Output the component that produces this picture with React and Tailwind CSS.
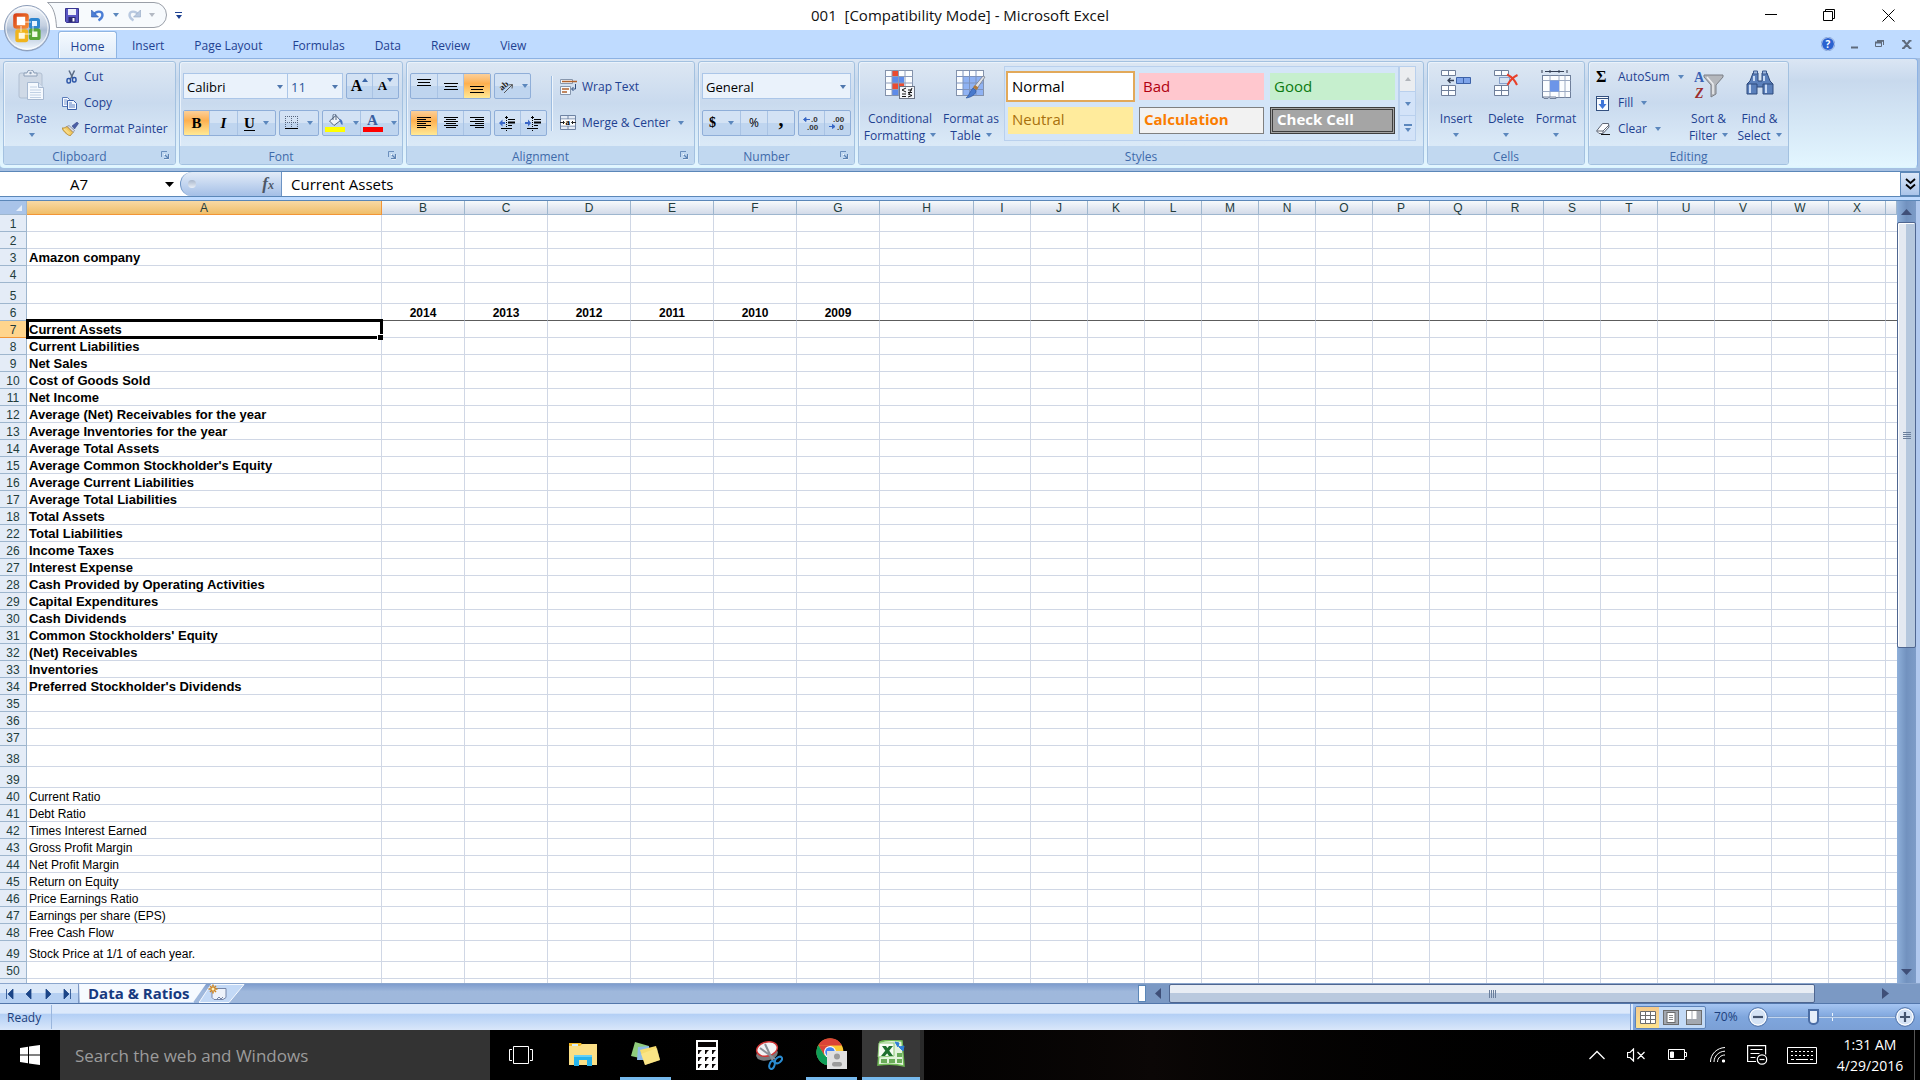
import { useState } from "react";
import clsx from "clsx";

const LETTERS = "BCDEFGHIJKLMNOPQRSTUVWX".split("");
const YEARS = ["2014", "2013", "2012", "2011", "2010", "2009"];

const ROWS = [
  { n: 1 },
  { n: 2 },
  { n: 3, text: "Amazon company", bold: true },
  { n: 4 },
  { n: 5, tall: true },
  { n: 6, years: true },
  { n: 7, text: "Current Assets", bold: true },
  { n: 8, text: "Current Liabilities", bold: true },
  { n: 9, text: "Net Sales", bold: true },
  { n: 10, text: "Cost of Goods Sold", bold: true },
  { n: 11, text: "Net Income", bold: true },
  { n: 12, text: "Average (Net) Receivables for the year", bold: true },
  { n: 13, text: "Average Inventories for the year", bold: true },
  { n: 14, text: "Average Total Assets", bold: true },
  { n: 15, text: "Average Common Stockholder's Equity", bold: true },
  { n: 16, text: "Average Current Liabilities", bold: true },
  { n: 17, text: "Average Total Liabilities", bold: true },
  { n: 18, text: "Total Assets", bold: true },
  { n: 22, text: "Total Liabilities", bold: true },
  { n: 26, text: "Income Taxes", bold: true },
  { n: 27, text: "Interest Expense", bold: true },
  { n: 28, text: "Cash Provided by Operating Activities", bold: true },
  { n: 29, text: "Capital Expenditures", bold: true },
  { n: 30, text: "Cash Dividends", bold: true },
  { n: 31, text: "Common Stockholders' Equity", bold: true },
  { n: 32, text: "(Net) Receivables", bold: true },
  { n: 33, text: "Inventories", bold: true },
  { n: 34, text: "Preferred Stockholder's Dividends", bold: true },
  { n: 35 },
  { n: 36 },
  { n: 37 },
  { n: 38, tall: true },
  { n: 39, tall: true },
  { n: 40, text: "Current Ratio" },
  { n: 41, text: "Debt Ratio" },
  { n: 42, text: "Times Interest Earned" },
  { n: 43, text: "Gross Profit Margin" },
  { n: 44, text: "Net Profit Margin" },
  { n: 45, text: "Return on Equity" },
  { n: 46, text: "Price Earnings Ratio" },
  { n: 47, text: "Earnings per share (EPS)" },
  { n: 48, text: "Free Cash Flow" },
  { n: 49, text: "Stock Price at 1/1 of each year.", tall: true },
  { n: 50 },
  { n: "" },
];

// small drop-down triangle
const Caret = ({ className = "text-[#5b87bd]" }) => (
  <svg width="6" height="4" viewBox="0 0 6 4" className={clsx("shrink-0", className)}>
    <path d="M0 0h6L3 4z" fill="currentColor" />
  </svg>
);

/* ---------- ribbon building blocks ---------- */

const Group = ({ label, launcher, className, children }) => (
  <section
    className={clsx(
      "flex h-[104px] shrink-0 flex-col overflow-hidden rounded-[3px] border border-[#a3c1e0] bg-linear-to-b from-[#dde7f3] from-0% via-[#c9daee] via-40% to-[#dae9f7] to-80% shadow-[inset_1px_1px_0_#eaf2fb]",
      className
    )}
  >
    <div className="flex h-[84px] px-[3px]">{children}</div>
    <div className="flex h-[18px] items-center bg-[#c1d8f0] px-1">
      <h2 className="flex-1 pt-1 text-center text-[12px] leading-4 text-[#3e6aaa]">{label}</h2>
      {launcher && (
        <button aria-label={`${label} options`} className="flex w-5 justify-end pr-px">
          <svg width="9" height="9" viewBox="0 0 9 9" fill="none">
            <path d="M0.5 6V0.5H6" stroke="#6b8fbd" />
            <path d="M3 3l3 3M8 3.5V8H3.5" stroke="#fff" />
            <path d="M4 4l3 3M7.5 3v4.5H3" stroke="#5d83b3" strokeWidth="1.2" />
          </svg>
        </button>
      )}
    </div>
  </section>
);

const BtnBox = ({ className, children }) => (
  <div
    className={clsx(
      "flex h-[26px] overflow-hidden rounded-[2px] border border-[#8faed8] bg-linear-to-b from-[#d3e2f4] from-50% to-[#bfd5ef] to-50% divide-x divide-[#a9c3e4]",
      className
    )}
  >
    {children}
  </div>
);

const Btn = ({ label, active, className, children }) => (
  <button
    aria-label={label}
    className={clsx(
      "flex items-center justify-center gap-2",
      active && "bg-linear-to-b from-[#fbcf98] via-[#fdb04f] via-40% to-[#ffe994]",
      className
    )}
  >
    {children}
  </button>
);

const SmallBtn = ({ icon, label, caret }) => (
  <button className="flex h-[26px] items-center whitespace-nowrap text-[12px] leading-4 text-[#1e4191]">
    <span className="flex w-[22px] shrink-0">{icon}</span>
    {label}
    {caret && <Caret className="ml-2 text-[#5b87bd]" />}
  </button>
);

const BigBtn = ({ icon, lines, className }) => (
  <button
    className={clsx(
      "flex h-[84px] flex-col items-center whitespace-nowrap pt-2 text-[12px] leading-[17px] text-[#1e4191]",
      className
    )}
  >
    <span className="flex h-10 items-start">{icon}</span>
    <span>{lines[0]}</span>
    <span className="flex h-4 items-center gap-[5px]">
      {lines[1]}
      <Caret />
    </span>
  </button>
);

const Combo = ({ label, value, className, selectClass }) => (
  <div className={clsx("relative h-[26px] border border-[#abc6e8] bg-[#eaf2fb]", className)}>
    <select
      aria-label={label}
      defaultValue={value}
      className={clsx("h-full w-full appearance-none bg-transparent pb-[2px] pl-[3px] text-[13px] leading-4 outline-none", selectClass)}
    >
      <option>{value}</option>
    </select>
    <Caret className="pointer-events-none absolute right-1 top-[11px] text-[#4f77ad]" />
  </div>
);

/* ---------- icons ---------- */

const Lines = ({ widths, top = 0, align = "center" }) => (
  <svg width="16" height="14" viewBox="0 0 16 14" shapeRendering="crispEdges">
    {widths.map((w, i) => {
      const x = align === "left" ? 1 : align === "right" ? 15 - w : (16 - w) / 2;
      return <rect key={i} x={x} y={top + i * 2 + (widths.length === 3 ? i : 0)} width={w} height="1" fill="#000" />;
    })}
  </svg>
);

const OfficeLogo = () => (
  <svg width="48" height="48" viewBox="0 0 48 48">
    <defs>
      <linearGradient id="orb" x1="0" y1="0" x2="0" y2="1">
        <stop offset="0" stopColor="#f5f8fc" />
        <stop offset="0.45" stopColor="#c3cfe0" />
        <stop offset="0.55" stopColor="#a9bbd3" />
        <stop offset="1" stopColor="#f4faff" />
      </linearGradient>
      <linearGradient id="orbRed" x1="0" y1="0" x2="1" y2="1">
        <stop offset="0" stopColor="#d8431b" />
        <stop offset="1" stopColor="#f58a32" />
      </linearGradient>
    </defs>
    <circle cx="24" cy="25" r="22.5" fill="#7186a5" opacity="0.5" />
    <circle cx="24" cy="24" r="22.5" fill="url(#orb)" stroke="#8b9cb8" />
    <circle cx="24" cy="24" r="21" fill="none" stroke="#fff" opacity="0.8" />
    <rect x="12" y="11" width="12" height="12" rx="1.5" fill="#fff" stroke="url(#orbRed)" strokeWidth="3.6" />
    <rect x="27.5" y="15.5" width="8" height="8" rx="1" fill="#e8f4ff" stroke="#2f86cf" strokeWidth="3" />
    <rect x="14" y="27" width="9.5" height="9.5" rx="1" fill="#fff9e0" stroke="#f0b41c" strokeWidth="3.4" />
    <rect x="27.500" y="26" width="8.5" height="8.5" rx="1" fill="#f1fbe8" stroke="#57a637" strokeWidth="3.2" />
    <path d="M21 18h7M21 30h7M18 22v6M30 21v7" stroke="#fff" opacity="0.8" />
  </svg>
);

const SaveIcon = () => (
  <svg width="14" height="15" viewBox="0 0 14 15">
    <path d="M0.5 0.5h13v14h-12l-1-1z" fill="#5a57c4" stroke="#38358f" />
    <rect x="3" y="1" width="8" height="6" fill="#eef1fa" />
    <rect x="3.5" y="9" width="7" height="5" fill="#2b2970" />
    <rect x="7.5" y="10" width="2" height="3.5" fill="#fff" />
  </svg>
);

const UndoIcon = ({ color = "#4c7ed6", dark = "#2f5bb0" }) => (
  <svg width="14" height="13" viewBox="0 0 14 13" fill="none">
    <path d="M2.5 6C5 1.5 11.5 1.5 11.5 6c0 2.5-1.500 4-4 5.5" stroke={color} strokeWidth="2.4" />
    <path d="M0.5 1v7h7z" fill={color} stroke={dark} strokeWidth="0.6" />
  </svg>
);

const PasteIcon = () => (
  <svg width="27" height="31" viewBox="0 0 27 31">
    <rect x="1" y="3" width="23" height="25" rx="2" fill="#cfd9e6" stroke="#b0bfd2" />
    <path d="M6 6V3h3a3.5 3 0 0 1 7 0h3v3z" fill="#e7edf5" stroke="#8ea0b8" />
    <circle cx="12.5" cy="3" r="1.2" fill="#8ea0b8" />
    <path d="M9.5 12.5h11l5 5v12h-16z" fill="#f5f9fe" stroke="#a7b9d1" />
    <path d="M20.5 12.5v5h5" fill="#dbe6f3" stroke="#a7b9d1" />
    <path d="M12 17h7M12 20h11M12 22.5h11M12 25h11M12 27.5h11" stroke="#c0d0e4" />
  </svg>
);

const CutIcon = () => (
  <svg width="12" height="14" viewBox="0 0 12 14" fill="none">
    <path d="M3 0.5l4 8M8.500 0.5L4.5 9" stroke="#5a6b85" strokeWidth="1.5" />
    <rect x="1" y="8.5" width="3.5" height="4.5" rx="1.5" stroke="#2d56a8" strokeWidth="1.5" />
    <rect x="6.5" y="7.5" width="3.5" height="4.5" rx="1.5" stroke="#2d56a8" strokeWidth="1.5" />
  </svg>
);

const CopyIcon = () => (
  <svg width="15" height="13" viewBox="0 0 15 13">
    <path d="M0.5 0.5h5l2 2v7h-7z" fill="#f4f8fe" stroke="#5a7cba" />
    <path d="M2 3h3M2 5h4M2 7h4" stroke="#7e9bd0" />
    <path d="M5.5 3.5h6l3 3v6h-9z" fill="#f4f8fe" stroke="#3a5fa8" />
    <path d="M7 6h3M7 8h6M7 10h6" stroke="#5d80c4" />
  </svg>
);

const PainterIcon = () => (
  <svg width="17" height="14" viewBox="0 0 17 14">
    <path d="M10 4l5-4 1.5 1.5L12.5 7z" fill="#4b5fa6" stroke="#313f7d" strokeWidth="0.5" />
    <path d="M7 3.500l5.5 5-1.5 2-6-6z" fill="#d8dbe5" stroke="#6b6f80" strokeWidth="0.6" />
    <path d="M5 4.5l6 6-3 3.500C4 12 1 9 0 6c2 0 3.5-0.5 5-1.5z" fill="#f0c861" stroke="#a87a25" strokeWidth="0.7" />
    <path d="M3 6.5l5 5M2 7l5 5.5" stroke="#fff0b5" strokeWidth="0.7" />
  </svg>
);

const BorderIcon = () => (
  <svg width="14" height="14" viewBox="0 0 14 14" fill="none" shapeRendering="crispEdges">
    <path d="M0.5 0v12M6.5 0v12M12.5 0v12M0 0.5h13M0 6.5h13" stroke="#55657d" strokeDasharray="1 1" />
    <path d="M0 12.5h13" stroke="#000" />
  </svg>
);

const FillIcon = () => (
  <svg width="20" height="18" viewBox="0 0 20 18">
    <path d="M4.5 7L11 1.5l4.5 5L9 11.5z" fill="#eef3fa" stroke="#53647d" />
    <path d="M8 6V1.5c0-2 3-2 3 0V6" fill="none" stroke="#53647d" />
    <path d="M14 5c3 0 4 2.5 3.5 6-2-0.5-2-3-3.5-6z" fill="#4674c1" />
    <rect y="13" width="20" height="5" fill="#ff0" />
  </svg>
);

const OrientIcon = () => (
  <svg width="17" height="16" viewBox="0 0 17 16">
    <text x="2" y="11" transform="rotate(-42 6 8)" fontSize="9" fontWeight="bold" fontFamily="Liberation Serif, serif" fill="#222">
      ab
    </text>
    <path d="M7 15l8-8M15.5 6.500l-4 0.5M15.5 6.5l-0.5 4" stroke="#555" fill="none" />
  </svg>
);

const IndentIcon = ({ right }) => (
  <svg width="17" height="15" viewBox="0 0 17 15">
    <path d="M7.5 0v15" stroke="#000" strokeDasharray="1 1" />
    <path d="M6 1.5h3M2 12.5h11M9 3.5h7M9 9.5h4" stroke="#000" />
    <path d="M9 6.5h7" stroke="#000" strokeWidth="2" />
    <path d={right ? "M0 6h3V3.5L6 7 3 10.5V8H0z" : "M6 6H3.5V3.5L0 7l3.5 3.5V8H6z"} fill="#3a67c8" />
  </svg>
);

const WrapIcon = () => (
  <svg width="17" height="16" viewBox="0 0 17 16" fill="none">
    <path d="M0.5 0.5h12v4h-12zM0.5 7.5h10v8h-10z" fill="#f7fafe" stroke="#8797ad" />
    <path d="M2 2.5h15M2 10h7M2 13h5" stroke="#b0622d" strokeWidth="1.5" />
    <path d="M15.5 5v5H12M13.500 8l-2 2 2 2" stroke="#33507f" />
  </svg>
);

const MergeIcon = () => (
  <svg width="17" height="16" viewBox="0 0 17 16">
    <path d="M0.5 0.5h15v14h-15zM8 0v4M8 11v4M0 4h16M0 11h16" fill="#e3ebf6" stroke="#6e83a3" />
    <rect x="1" y="4.5" width="14" height="6" fill="#fff" />
    <path d="M0 7.500h4M3 6l1.5 1.500L3 9M16 7.5h-4M13 6l-1.5 1.5L13 9" stroke="#222" fill="none" />
    <text x="5.5" y="10" fontSize="9" fontWeight="bold" fontFamily="Liberation Serif, serif">
      a
    </text>
  </svg>
);

const DecimalIcon = ({ dec }) => (
  <svg width="20" height="16" viewBox="0 0 20 16" fontSize="8" fontFamily="Liberation Sans, sans-serif" fontWeight="bold" fill="#333">
    <text x={dec ? 5 : 9} y="7">
      {dec ? ".00" : ".0"}
    </text>
    <text x={dec ? 9 : 5} y="15">
      {dec ? ".0" : ".00"}
    </text>
    {dec ? (
      <path d="M1 11.5h4M4.5 9.5l2.500 2-2.5 2z" stroke="#3565c4" fill="#3565c4" />
    ) : (
      <path d="M4 4.5h4M4 2.5l-2.5 2 2.500 2z" stroke="#3565c4" fill="#3565c4" />
    )}
  </svg>
);

const CondIcon = () => (
  <svg width="31" height="29" viewBox="0 0 31 29">
    <rect x="0.5" y="0.5" width="27" height="25" fill="#fbfdff" stroke="#8392ab" />
    <path d="M7 1h6v5H7zM7 13h12v6H7z" fill="#ea4b31" />
    <path d="M7 6h12v7H7zM7 19h6v6H7z" fill="#5d8bea" />
    <path d="M7 0v26M13.5 0v26M20 0v26M0 6.5h28M0 13h28M0 19.5h28" stroke="#8c9cba" fill="none" />
    <rect x="14.5" y="16.5" width="15" height="12" fill="#f4f6fa" stroke="#6b7485" />
    <path d="M21 18l-4 2 4 2M17 24h4M17 26.5h4M23 20h4M23 22.5h4M27 18l-3 6M23 24l4 1.5-4 1.5" stroke="#111" fill="none" />
  </svg>
);

const TableIcon = () => (
  <svg width="31" height="29" viewBox="0 0 31 29">
    <rect x="0.5" y="0.5" width="27" height="25" fill="#fbfdff" stroke="#8392ab" />
    <rect x="7" y="6" width="20" height="19" fill="#8fb2f3" />
    <path d="M7 0v26M13.5 0v26M20 0v26M0 6.5h28M0 13h28M0 19.5h28" stroke="#7d93bd" fill="none" />
    <path d="M29 7l-9 13-3-2L27 6z" fill="#dfe2e8" stroke="#70757f" strokeWidth="0.7" />
    <path d="M20.5 20L17 17.5l2-2.5 3.500 2.5z" fill="#b07a3a" />
    <path d="M20 20.5c0 4-5 7-10 7.5 3-2 4-7 7-10z" fill="#4879cc" stroke="#28509a" strokeWidth="0.6" />
  </svg>
);

const InsertIcon = () => (
  <svg width="31" height="27" viewBox="0 0 31 27">
    <path d="M0.5 0.5h14v5h-14zM7.5 0.5v5M0.5 15.5h14v10h-14zM7.5 15.5v10M0.5 20.5h14" fill="#fbfdff" stroke="#6f7f9a" />
    <path d="M15.5 7.5h14v6h-14zM22.5 7.5v6" fill="#7ea4ea" stroke="#3d62a8" />
    <path d="M13 10.5H7M9.5 8L7 10.5 9.5 13" stroke="#333f55" fill="none" strokeWidth="1.3" />
  </svg>
);

const DeleteIcon = () => (
  <svg width="25" height="27" viewBox="0 0 25 27">
    <path d="M0.5 0.5h14v5h-14zM7.5 0.5v5M0.5 15.5h14v10h-14zM7.5 15.5v10M0.5 20.5h14" fill="#fbfdff" stroke="#6f7f9a" />
    <path d="M5.5 7.5h10v6h-10z" fill="none" stroke="#3d62a8" strokeDasharray="1 1" />
    <path d="M13 4.5c4 2 8 6 10 10.5M23.5 5c-4 2-8 6-10 10" stroke="#e8402a" strokeWidth="2" fill="none" />
  </svg>
);

const FormatIcon = () => (
  <svg width="31" height="30" viewBox="0 0 31 30">
    <path d="M1 0v3M26 0v3M4 1.500h7M16 1.5h7M9 0v3M18 0v3M9 1.5h9" stroke="#333f55" fill="none" />
    <rect x="1.5" y="5.5" width="28" height="22" fill="#fbfdff" stroke="#6f7f9a" />
    <path d="M9 5.5v22M18 5.5v22M24 5.5v22M1.5 10.5h28M1.5 21.5h28" stroke="#9caac2" fill="none" />
    <rect x="9" y="10.5" width="9" height="11" fill="#6c95e8" />
    <path d="M2 27h13v1.5H9l-1-1-1 1H3z" fill="#eef2f8" stroke="#6f7f9a" />
  </svg>
);

const SortIcon = () => (
  <svg width="30" height="30" viewBox="0 0 30 30" fontFamily="Liberation Serif, serif" fontWeight="bold">
    <text x="0" y="12" fontSize="14" fill="#3a63b5">
      A
    </text>
    <text x="1" y="28" fontSize="14" fill="#9c2b2b" fontStyle="italic">
      Z
    </text>
    <path d="M10 5h19v2l-7 8v9l-5 3V15l-7-8z" fill="#b4b7bc" stroke="#7b7f86" />
    <path d="M13 7l6 7v10" stroke="#eceef1" strokeWidth="1.5" fill="none" />
  </svg>
);

const FindIcon = () => (
  <svg width="28" height="26" viewBox="0 0 28 26">
    <path d="M7 3h5v8h4V3h5l3 8 3 3v10H17v-7h-6v7H1V14l3-3z" fill="#5b80bb" stroke="#2e4a7d" />
    <path d="M7.5 1h4v3h-4zM16.5 1h4v3h-4z" fill="#9bb6de" stroke="#3d5a8f" />
    <path d="M4 14v9M20 14v9M8 6v5M18 6v5" stroke="#c9dbf5" strokeWidth="2" />
    <path d="M1 14h10v3M17 17v-3h10" stroke="#2e4a7d" fill="none" />
  </svg>
);

const FillDownIcon = () => (
  <svg width="13" height="15" viewBox="0 0 13 15">
    <rect x="0.5" y="0.5" width="12" height="14" fill="#f7fafe" stroke="#33507f" />
    <path d="M1 2.5h11" stroke="#33507f" />
    <path d="M5 4h3v4h2.5L6.5 13 2.5 8H5z" fill="#3d74d8" />
  </svg>
);

const EraserIcon = () => (
  <svg width="14" height="12" viewBox="0 0 14 12">
    <path d="M0.5 8L6.5 0.5h6L13 4 7 10.5H3z" fill="#fafbfd" stroke="#5e6675" />
    <path d="M1 8h6l6-6M7 8v2.5" stroke="#5e6675" fill="none" />
    <path d="M5 11.5h9" stroke="#111" />
  </svg>
);

/* ---------- top of the window ---------- */

const TitleBar = () => (
  <header className="relative flex h-[30px] shrink-0 items-center bg-white">
    <button aria-label="Office Button" className="absolute left-[3px] top-1 z-10">
      <OfficeLogo />
    </button>
    <div className="relative ml-[47px] flex h-[26px] w-[120px] items-center pl-[18px]">
      <svg className="absolute inset-0" width="120" height="26" viewBox="0 0 120 26">
        <path d="M0.5 0.5C7 5 9 15 9.5 25.5H107a12.5 12.5 0 0 0 0-25z" fill="#f7fafd" stroke="#9a9fa8" />
      </svg>
      <div className="relative flex items-center">
        <button aria-label="Save">
          <SaveIcon />
        </button>
        <button aria-label="Undo" className="ml-3 flex items-center gap-2">
          <UndoIcon />
          <Caret />
        </button>
        <button aria-label="Redo" className="ml-2 flex items-center gap-2">
          <span className="-scale-x-100">
            <UndoIcon color="#b9c9e0" dark="#94a7c4" />
          </span>
          <Caret className="text-[#b3b9c3]" />
        </button>
      </div>
    </div>
    <button aria-label="Customize Quick Access Toolbar" className="ml-2 flex flex-col items-center gap-[2px]">
      <span className="h-px w-[7px] bg-[#1e4191]" />
      <Caret className="text-[#1e4191]" />
    </button>
    <h1 className="absolute left-1/2 -translate-x-1/2 whitespace-pre text-[15px] leading-5 text-[#111]">
      001  [Compatibility Mode] - Microsoft Excel
    </h1>
    <div className="ml-auto flex pr-[25px]">
      <button aria-label="Minimize" className="flex w-[58px] justify-end">
        <svg width="13" height="13" viewBox="0 0 13 13" stroke="#000">
          <path d="M0 5.5h12" />
        </svg>
      </button>
      <button aria-label="Restore" className="flex w-[58px] justify-end">
        <svg width="13" height="13" viewBox="0 0 13 13" stroke="#000" fill="none">
          <path d="M0.5 2.5h9v9h-9zM2.5 2.500v-2h9v9h-2" />
        </svg>
      </button>
      <button aria-label="Close" className="flex w-[59px] justify-end">
        <svg width="13" height="13" viewBox="0 0 13 13" stroke="#000">
          <path d="M0.5 0.5l12 12M12.5 0.5l-12 12" />
        </svg>
      </button>
    </div>
  </header>
);

const TabRow = () => (
  <nav className="flex h-7 shrink-0 items-end bg-[#bfdbff] pl-[58px] text-[12px] leading-4 text-[#1e4191]">
    <button className="h-[27px] w-[59px] rounded-t-[3px] border border-b-0 border-[#8fb5e3] bg-linear-to-b from-[#f5faff] to-[#dfebf8] pt-[3px] shadow-[inset_1px_1px_0_#fff]">
      Home
    </button>
    {["Insert", "Page Layout", "Formulas", "Data", "Review", "View"].map((tab) => (
      <button key={tab} className="h-[27px] px-[15px] pt-[3px]">
        {tab}
      </button>
    ))}
    <div className="ml-auto flex h-full items-center gap-4 pr-2 text-[#5f6b7c]">
      <button aria-label="Help">
        <svg width="14" height="14" viewBox="0 0 14 14">
          <circle cx="7" cy="7" r="6.5" fill="#2b62d0" stroke="#fff" />
          <circle cx="7" cy="7" r="6.8" fill="none" stroke="#4b78c8" strokeWidth="0.6" />
          <text x="7" y="11" textAnchor="middle" fontSize="10" fontWeight="bold" fill="#fff">
            ?
          </text>
        </svg>
      </button>
      <button aria-label="Minimize workbook">
        <svg width="8" height="10" viewBox="0 0 8 10">
          <path d="M0 8.5h7" stroke="currentColor" strokeWidth="2" />
        </svg>
      </button>
      <button aria-label="Restore workbook">
        <svg width="10" height="8" viewBox="0 0 10 8" fill="none" stroke="currentColor">
          <path d="M0.5 2.5h6v4h-6zM2.5 1h6v4" />
          <path d="M0 2.5h7M2 0.5h7" strokeWidth="2" />
        </svg>
      </button>
      <button aria-label="Close workbook" className="ml-px">
        <svg width="10" height="9" viewBox="0 0 10 9" stroke="currentColor" strokeWidth="2">
          <path d="M1.5 0.5l6.500 8M8 0.5l-6.5 8M0 0.500h3M6.5 0.5h3M0 8.5h3M6.5 8.5h3" />
        </svg>
      </button>
    </div>
  </nav>
);

const ClipboardGroup = () => (
  <Group label="Clipboard" launcher className="w-[173px]">
    <BigBtn className="w-[49px]" icon={<PasteIcon />} lines={["Paste"]} />
    <div className="ml-[6px] flex flex-col pt-[2px]">
      <SmallBtn icon={<span className="pl-1"><CutIcon /></span>} label="Cut" />
      <SmallBtn icon={<CopyIcon />} label="Copy" />
      <SmallBtn icon={<PainterIcon />} label="Format Painter" />
    </div>
  </Group>
);

const FontGroup = () => (
  <Group label="Font" launcher className="w-[224px]">
    <div className="flex flex-col gap-[11px] pt-[11px]">
      <div className="flex">
        <Combo label="Font name" value="Calibri" className="w-[105px]" />
        <Combo label="Font size" value="11" className="w-[55px] border-l-0" selectClass="text-[#2b579a]" />
        <BtnBox className="ml-[3px] w-[53px]">
          <Btn label="Grow Font" className="flex-1">
            <span className="flex font-['Liberation_Serif',serif] text-[16px] font-bold leading-4">
              A<Caret className="rotate-180 text-[#3b66a8]" />
            </span>
          </Btn>
          <Btn label="Shrink Font" className="flex-1">
            <span className="flex font-['Liberation_Serif',serif] text-[13px] font-bold leading-4">
              A<Caret className="text-[#3b66a8]" />
            </span>
          </Btn>
        </BtnBox>
      </div>
      <div className="flex gap-[3px] font-['Liberation_Serif',serif] text-[15px] font-bold leading-4">
        <BtnBox className="w-[93px]">
          <Btn label="Bold" active className="w-[26px]">
            B
          </Btn>
          <Btn label="Italic" className="w-7 italic">
            I
          </Btn>
          <Btn label="Underline" className="flex-1">
            <span className="border-b border-black leading-[14px]">U</span>
            <Caret />
          </Btn>
        </BtnBox>
        <BtnBox className="w-10">
          <Btn label="Borders" className="flex-1">
            <BorderIcon />
            <Caret />
          </Btn>
        </BtnBox>
        <BtnBox className="w-[77px]">
          <Btn label="Fill Color" className="flex-1">
            <FillIcon />
            <Caret />
          </Btn>
          <Btn label="Font Color" className="flex-1">
            <span className="flex w-5 flex-col items-center border-b-[5px] border-[#f00] leading-[13px] text-[#3a5f9f]">A</span>
            <Caret />
          </Btn>
        </BtnBox>
      </div>
    </div>
  </Group>
);

const AlignmentGroup = () => (
  <Group label="Alignment" launcher className="w-[289px]">
    <div className="flex flex-col gap-[11px] pt-[11px]">
      <div className="flex gap-[3px]">
        <BtnBox className="w-[81px]">
          <Btn label="Top Align" className="flex-1">
            <Lines widths={[14, 12, 14]} top={0} />
          </Btn>
          <Btn label="Middle Align" className="flex-1">
            <Lines widths={[14, 12, 14]} top={4} />
          </Btn>
          <Btn label="Bottom Align" active className="flex-1">
            <Lines widths={[14, 12, 14]} top={7} />
          </Btn>
        </BtnBox>
        <BtnBox className="w-[37px]">
          <Btn label="Orientation" className="flex-1">
            <OrientIcon />
            <Caret />
          </Btn>
        </BtnBox>
      </div>
      <div className="flex gap-[3px]">
        <BtnBox className="w-[81px]">
          <Btn label="Align Left" active className="flex-1">
            <Lines widths={[14, 9, 14, 9, 14, 9]} align="left" top={1} />
          </Btn>
          <Btn label="Center" className="flex-1">
            <Lines widths={[14, 10, 14, 10, 14, 10]} top={1} />
          </Btn>
          <Btn label="Align Right" className="flex-1">
            <Lines widths={[14, 9, 14, 9, 14, 9]} align="right" top={1} />
          </Btn>
        </BtnBox>
        <BtnBox className="w-[53px]">
          <Btn label="Decrease Indent" className="flex-1">
            <IndentIcon />
          </Btn>
          <Btn label="Increase Indent" className="flex-1">
            <IndentIcon right />
          </Btn>
        </BtnBox>
      </div>
    </div>
    <div className="ml-1 mt-[14px] h-[55px] border-l border-[#9dbce0] shadow-[1px_0_0_#eef5fc]" />
    <div className="ml-2 flex flex-col gap-[10px] pt-3">
      <SmallBtn icon={<WrapIcon />} label="Wrap Text" />
      <SmallBtn icon={<MergeIcon />} label="Merge & Center" caret />
    </div>
  </Group>
);

const NumberGroup = () => (
  <Group label="Number" launcher className="w-[157px]">
    <div className="flex flex-col gap-[11px] pt-[11px]">
      <Combo label="Number format" value="General" className="w-[149px]" />
      <div className="flex gap-[3px]">
        <BtnBox className="w-[93px]">
          <Btn label="Accounting Format" className="w-[38px] gap-3">
            <span className="font-['Liberation_Serif',serif] text-[14px] font-bold leading-4">$</span>
            <Caret />
          </Btn>
          <Btn label="Percent Style" className="flex-1">
            <span className="text-[12px] leading-4">%</span>
          </Btn>
          <Btn label="Comma Style" className="flex-1">
            <span className="pb-2 font-['Liberation_Serif',serif] text-[20px] font-bold leading-4">,</span>
          </Btn>
        </BtnBox>
        <BtnBox className="w-[53px]">
          <Btn label="Increase Decimal" className="flex-1">
            <DecimalIcon />
          </Btn>
          <Btn label="Decrease Decimal" className="flex-1">
            <DecimalIcon dec />
          </Btn>
        </BtnBox>
      </div>
    </div>
  </Group>
);

const STYLES = [
  ["Normal", "bg-white text-black outline-2 outline-offset-0 outline-[#e2a95a]"],
  ["Bad", "bg-[#ffc7ce] text-[#b00010]"],
  ["Good", "bg-[#c6efce] text-[#0b7a10]"],
  ["Neutral", "bg-[#ffeb9c] text-[#a8700c]"],
  ["Calculation", "border border-[#7f7f7f] bg-[#f2f2f2] font-bold text-[#fa7d00]"],
  ["Check Cell", "border-3 border-double border-[#3f3f3f] bg-[#a5a5a5] font-bold text-white"],
];

const StylesGroup = () => (
  <Group label="Styles" className="w-[566px]">
    <BigBtn className="w-[76px]" icon={<CondIcon />} lines={["Conditional", "Formatting"]} />
    <BigBtn className="w-[66px]" icon={<TableIcon />} lines={["Format as", "Table"]} />
    <div className="mt-1 flex h-[75px]">
      <div className="grid w-[395px] grid-cols-3 gap-[6px] border border-[#b9d0ed] bg-[#d4e5f8] px-[3px] py-[6px]">
        {STYLES.map(([name, look]) => (
          <button key={name} className={clsx("flex h-[27px] items-center px-1 pb-[2px] text-[15px] leading-5", look)}>
            {name}
          </button>
        ))}
      </div>
      <div className="flex w-[17px] flex-col border border-[#b9d0ed]">
        <button aria-label="Scroll styles up" className="flex flex-1 items-center justify-center bg-[#ebedf0]">
          <Caret className="rotate-180 text-[#b0b4ba]" />
        </button>
        <button aria-label="Scroll styles down" className="flex flex-1 items-center justify-center border-y border-[#b9d0ed] bg-[#d3e3f8]">
          <Caret />
        </button>
        <button aria-label="More styles" className="flex flex-1 flex-col items-center justify-center gap-[2px] bg-[#d3e3f8]">
          <span className="h-[2px] w-2 bg-[#5b87bd]" />
          <Caret />
        </button>
      </div>
    </div>
  </Group>
);

const CellsGroup = () => (
  <Group label="Cells" className="w-[158px]">
    <BigBtn className="w-[50px]" icon={<InsertIcon />} lines={["Insert"]} />
    <BigBtn className="w-[50px]" icon={<DeleteIcon />} lines={["Delete"]} />
    <BigBtn className="w-[50px]" icon={<FormatIcon />} lines={["Format"]} />
  </Group>
);

const EditingGroup = () => (
  <Group label="Editing" className="w-[201px]">
    <div className="flex w-[91px] flex-col pl-1 pt-[2px]">
      <SmallBtn icon={<span className="font-['Liberation_Serif',serif] text-[16px] font-bold text-black">Σ</span>} label="AutoSum" caret />
      <SmallBtn icon={<FillDownIcon />} label="Fill" caret />
      <SmallBtn icon={<EraserIcon />} label="Clear" caret />
    </div>
    <BigBtn className="w-[51px]" icon={<SortIcon />} lines={["Sort &", "Filter"]} />
    <BigBtn className="w-[51px]" icon={<FindIcon />} lines={["Find &", "Select"]} />
  </Group>
);

const Ribbon = () => (
  <div className="h-[113px] shrink-0 bg-[#a6c0e2] pr-[2px]">
    <div className="flex h-[110px] gap-[3px] rounded-b-[4px] rounded-tr-[4px] border-b border-r border-t border-[#8db2e3] border-b-[#d9f6ff] bg-linear-to-b from-[#dbe6f4] from-0% via-[#c8d9ed] via-20% to-[#e3f6ff] pl-[3px] pt-[2px]">
      <ClipboardGroup />
      <FontGroup />
      <AlignmentGroup />
      <NumberGroup />
      <StylesGroup />
      <CellsGroup />
      <EditingGroup />
    </div>
  </div>
);

const FormulaBar = () => (
  <div className="flex h-[26px] shrink-0 border-y border-[#5b87b8] bg-white text-[15px] leading-5 text-black">
    <input aria-label="Name Box" defaultValue="A7" className="w-[158px] text-center outline-none" />
    <button aria-label="Names" className="flex w-[22px] items-center justify-center">
      <svg width="9" height="5" viewBox="0 0 9 5">
        <path d="M0 0h9L4.5 5z" />
      </svg>
    </button>
    <div className="flex w-[102px] items-center justify-between rounded-l-full border-l border-r border-[#6c93c4] bg-linear-to-b from-[#e3ecf8] to-[#a4bfe6] pl-[7px] pr-[7px]">
      <span className="size-2 rounded-full bg-linear-to-b from-[#a9b7cc] to-[#eaf0f8]" />
      <button className="font-['Liberation_Serif',serif] text-[17px] font-bold italic text-[#4d5766]" aria-label="Insert Function">
        f<span className="text-[12px]">x</span>
      </button>
    </div>
    <input aria-label="Formula" defaultValue="Current Assets" className="min-w-0 flex-1 pl-[9px] outline-none" />
    <button aria-label="Expand Formula Bar" className="flex w-5 items-center justify-center border border-[#5b87b8] bg-linear-to-b from-[#dce8f8] to-[#a9c4ea]">
      <svg width="11" height="12" viewBox="0 0 11 12" fill="none" stroke="#000" strokeWidth="1.8">
        <path d="M1 1l4.5 4L10 1M1 6.5l4.500 4 4.500-4" />
      </svg>
    </button>
  </div>
);

/* ---------- the sheet ---------- */

const HEAD = "h-[14px] border-b border-r border-[#9eb6ce] bg-linear-to-b from-[#f7fafc] to-[#d3dbe9] p-0 pt-px text-[12px] font-normal leading-3";

const Sheet = () => (
  <div className="min-w-0 flex-1 overflow-hidden bg-white">
    <table className="w-full table-fixed border-separate border-spacing-0 font-['Liberation_Sans',Arial,sans-serif] text-[12px] leading-[14px] text-black">
      <colgroup>
        <col className="w-[27px]" />
        <col className="w-[355px]" />
        {LETTERS.map((l) => (
          <col key={l} className={l < "H" ? "w-[83px]" : l === "H" ? "w-[94px]" : "w-[57px]"} />
        ))}
        <col />
      </colgroup>
      <thead className="text-[#223c3c]">
        <tr>
          <th aria-label="Select all" className="h-[14px] border-b border-r border-[#9eb6ce] bg-[#a9c4e9] p-0">
            <svg className="ml-auto mr-1" width="6" height="6" viewBox="0 0 6 6">
              <path d="M6 0v6H0z" fill="#e6effa" />
            </svg>
          </th>
          <th className="h-[14px] border-b border-r border-[#f29536] bg-linear-to-b from-[#f9d9a4] to-[#f0be68] p-0 pt-px text-[12px] font-normal leading-3">A</th>
          {LETTERS.map((l) => (
            <th key={l} className={HEAD}>
              {l}
            </th>
          ))}
          <th className={HEAD} />
        </tr>
      </thead>
      <tbody>
        {ROWS.map((row) => {
          const line = row.years ? "border-b-[#5c5c5c]" : "border-b-[#d0d7e5]";
          const cell = clsx("border-b border-r border-r-[#d0d7e5] p-0", line);
          return (
            <tr key={row.n} className={row.tall ? "h-[21px]" : "h-[17px]"}>
              <th
                scope="row"
                className={clsx(
                  "border-b border-r p-0 align-bottom font-normal text-[#223c3c]",
                  row.n === 7 ? "border-[#f29536] bg-[#ffd58d]" : "border-[#9eb6ce] bg-[#e4ecf7]"
                )}
              >
                {row.n}
              </th>
              <td
                className={clsx(
                  cell,
                  "whitespace-nowrap pl-[2px] align-bottom",
                  row.bold && "text-[13px] font-bold",
                  row.n === 7 && "relative"
                )}
              >
                {row.text}
                {row.n === 7 && (
                  <span className="absolute -bottom-[2px] -left-px -right-[2px] -top-[2px] border-[3px] border-black">
                    <span className="absolute -bottom-[4px] -right-[3px] size-[6px] border-l border-t border-white bg-black" />
                  </span>
                )}
              </td>
              {LETTERS.map((l, i) => (
                <td key={l} className={clsx(cell, row.years && "text-center align-bottom font-bold")}>
                  {row.years ? YEARS[i] : null}
                </td>
              ))}
              <td className={clsx("border-b p-0", line)} />
            </tr>
          );
        })}
      </tbody>
    </table>
  </div>
);

const VerticalScroll = () => (
  <div className="flex w-[23px] shrink-0 bg-[#b0c8ee]">
    <div className="flex w-[19px] flex-col items-center bg-linear-to-r from-[#8fb0da] via-[#7292bf] to-[#7d9cc8]">
      <button aria-label="Scroll up" className="flex h-[21px] items-center">
        <svg width="11" height="6" viewBox="0 0 11 6">
          <path d="M5.5 0L11 6H0z" fill="#3f4f78" />
        </svg>
      </button>
      <div className="flex h-[426px] w-full flex-col items-center justify-center gap-px rounded-[2px] border border-[#4f6690] bg-linear-to-r from-[#e4e9f1] from-45% to-[#b5c7dd] to-50% shadow-[inset_1px_1px_0_#fff]">
        {[0, 1, 2, 3].map((i) => (
          <span key={i} className="h-px w-2 bg-[#6b7f9c]" />
        ))}
      </div>
      <button aria-label="Scroll down" className="mt-auto flex h-[22px] items-center">
        <svg width="11" height="6" viewBox="0 0 11 6">
          <path d="M5.5 6L11 0H0z" fill="#3f4f78" />
        </svg>
      </button>
    </div>
  </div>
);

const NAV = [
  ["First sheet", "M1.5 0v10M8 0v10L3 5z"],
  ["Previous sheet", "M7 0v10L2 5z"],
  ["Next sheet", "M2 0v10l5-5z"],
  ["Last sheet", "M1 0v10l5-5zM7.5 0v10"],
];

const SheetBar = () => (
  <div className="flex h-[21px] shrink-0 border-b border-t border-[#5377ab] border-t-[#8ba6cd] bg-linear-to-b from-[#7f9dcd] to-[#9fb8dc] to-40%">
    <div className="flex h-full w-[79px] items-center justify-around border-r border-[#7d98c4] bg-linear-to-b from-[#dce9f9] from-45% to-[#b6d0f2] to-50% pr-px">
      {NAV.map(([label, d]) => (
        <button key={label} aria-label={label}>
          <svg width="9" height="10" viewBox="0 0 9 10" fill="#1c4587" stroke="#1c4587" strokeWidth="0.8">
            <path d={d} />
          </svg>
        </button>
      ))}
    </div>
    <button className="relative h-[19px] w-[120px] pl-[9px] text-left text-[15px] font-bold leading-[19px] text-[#16397f]">
      <svg className="absolute left-0 top-0" width="127" height="19" viewBox="0 0 127 19">
        <path d="M0 0h127L114 18.5H1z" fill="#f6faff" />
        <path d="M6 18.5h109" stroke="#c5d8f3" />
      </svg>
      <span className="relative whitespace-nowrap">Data &amp; Ratios</span>
    </button>
    <button aria-label="Insert Worksheet" className="h-[19px]">
      <svg width="46" height="19" viewBox="0 0 46 19">
        <path d="M12 0.5h33L30 18.5H0z" fill="#c3d9f6" stroke="#f6faff" />
        <path d="M13 4.5h14v9l-3 2h-9l-2-2z" fill="#eef3fb" stroke="#7485a8" />
        <path d="M18 15l2-2 2 2 2-2" stroke="#7485a8" fill="none" />
        <path d="M14 0.5v9M9.5 5h9M11 2l6 6M17 2l-6 6" stroke="#d08520" strokeWidth="1.5" />
        <circle cx="14" cy="5" r="1.5" fill="#fff2c0" />
      </svg>
    </button>
    <div className="ml-auto flex h-[19px] w-[782px] bg-[#7b99c4]">
      <div className="my-px w-2 border border-[#5b87b8] bg-white" />
      <button aria-label="Scroll left" className="flex w-[23px] items-center justify-center">
        <svg width="6" height="11" viewBox="0 0 6 11">
          <path d="M0 5.5L6 0v11z" fill="#3f4f78" />
        </svg>
      </button>
      <div className="flex w-[646px] items-center justify-center gap-px rounded-[2px] border border-[#4f6690] bg-linear-to-b from-[#e8edf4] from-45% to-[#b9c9de] to-50%">
        {[0, 1, 2, 3].map((i) => (
          <span key={i} className="h-2 w-px bg-[#6b7f9c]" />
        ))}
      </div>
      <button aria-label="Scroll right" className="ml-auto mr-[31px]">
        <svg width="7" height="11" viewBox="0 0 7 11">
          <path d="M7 5.5L0 0v11z" fill="#3f4f78" />
        </svg>
      </button>
    </div>
  </div>
);

const StatusBar = () => {
  const [zoom, setZoom] = useState(70);
  return (
    <footer className="flex h-[26px] shrink-0 bg-linear-to-b from-[#dce9fb] from-35% via-[#b3cff5] via-40% to-[#d9e7fa] text-[12px] leading-4 text-[#1c3f7c]">
      <div className="my-px w-[52px] border-r border-[#9ab6dd] pl-[7px] pt-[5px]">Ready</div>
      <div className="ml-auto flex w-[290px] items-center border-l border-[#7d9fd3] bg-linear-to-b from-[#a5c5f2] via-[#7fa6dd] to-[#7ba0d6] pl-1 shadow-[inset_2px_0_0_#dce9fb]">
        <div className="flex h-[23px] w-[71px] overflow-hidden rounded-[2px] border border-[#5d83b9] bg-[#c3daf6]">
          <button aria-label="Normal view" className="flex w-[23px] items-center justify-center bg-linear-to-b from-[#f5c98b] to-[#fde38e]">
            <svg width="16" height="13" viewBox="0 0 16 13">
              <path d="M0.5 0.5h15v12h-15zM5.5 0v13M10.5 0v13M0 4.5h16M0 8.5h16" fill="#fff" stroke="#6d6d6d" />
            </svg>
          </button>
          <button aria-label="Page layout view" className="flex w-[23px] items-center justify-center">
            <svg width="16" height="15" viewBox="0 0 16 15">
              <rect x="0.5" y="0.5" width="15" height="14" fill="#a3a8b0" stroke="#6d6d6d" />
              <rect x="4" y="2.5" width="8" height="10" fill="#fff" stroke="#6d6d6d" />
              <path d="M6 5.5h4M6 7.5h4M6 9.5h4" stroke="#8b8b8b" />
            </svg>
          </button>
          <button aria-label="Page break view" className="flex w-[23px] items-center justify-center">
            <svg width="16" height="15" viewBox="0 0 16 15">
              <rect x="0.5" y="0.5" width="15" height="14" fill="#a3a8b0" stroke="#6d6d6d" />
              <path d="M1 1h4.5v8H1zM6.5 1h4v8h-4z" fill="#fff" />
            </svg>
          </button>
        </div>
        <span className="ml-2 w-[34px]">{zoom}%</span>
        <button aria-label="Zoom out" onClick={() => setZoom(Math.max(10, zoom - 10))}>
          <svg width="20" height="20" viewBox="0 0 20 20">
            <circle cx="10" cy="10" r="9.3" fill="#d5e3f5" stroke="#4a6da5" />
            <circle cx="10" cy="10" r="8" fill="none" stroke="#fff" />
            <path d="M5 10h10" stroke="#44546e" strokeWidth="2.2" />
          </svg>
        </button>
        <div className="relative flex h-5 w-[127px] items-center">
          <span className="absolute left-16 top-[6px] h-2 w-px bg-[#eef5fd]" />
          <input
            type="range"
            aria-label="Zoom"
            min="10"
            max="184"
            value={zoom}
            onChange={(e) => setZoom(Number(e.target.value))}
            className="relative h-4 w-full appearance-none bg-[linear-gradient(#5f88c4,#e3eefb)] bg-[length:100%_2px] bg-center bg-no-repeat [&::-webkit-slider-thumb]:h-4 [&::-webkit-slider-thumb]:w-[11px] [&::-webkit-slider-thumb]:appearance-none [&::-webkit-slider-thumb]:rounded-b-[5px] [&::-webkit-slider-thumb]:border-2 [&::-webkit-slider-thumb]:border-[#4a6da5] [&::-webkit-slider-thumb]:bg-[#e6effa]"
          />
        </div>
        <button aria-label="Zoom in" onClick={() => setZoom(Math.min(184, zoom + 10))}>
          <svg width="20" height="20" viewBox="0 0 20 20">
            <circle cx="10" cy="10" r="9.3" fill="#d5e3f5" stroke="#4a6da5" />
            <circle cx="10" cy="10" r="8" fill="none" stroke="#fff" />
            <path d="M5 10h10M10 5v10" stroke="#44546e" strokeWidth="2.2" />
          </svg>
        </button>
      </div>
    </footer>
  );
};

/* ---------- Windows taskbar ---------- */

const TASKS = [
  {
    name: "Task View",
    icon: (
      <svg width="24" height="18" viewBox="0 0 24 18" fill="none" stroke="#fff">
        <path d="M4.5 0.5h15v17h-15zM3 3.5H0.5v11H3M21 3.5h2.500v11H21" />
      </svg>
    ),
  },
  {
    name: "File Explorer",
    icon: (
      <svg width="28" height="24" viewBox="0 0 28 24">
        <path d="M0 0h12l2 3H0z" fill="#f5b921" />
        <path d="M3 1h6v2H3z" fill="#d6eefb" />
        <path d="M0 3h11l2-2h15v21H0z" fill="#fbdf86" />
        <path d="M5 23V12h18v11h-5v-6h-8v6z" fill="#27b4ec" />
        <path d="M5 12h18v2H5z" fill="#64d0f8" />
      </svg>
    ),
  },
  {
    name: "Sticky Notes",
    open: true,
    icon: (
      <svg width="30" height="24" viewBox="0 0 30 24">
        <path d="M5 0l14 4-5 13L1 14z" fill="#8fcb7c" />
        <path d="M8 5l11-1 1 14-13 0z" fill="#8dbbe8" />
        <path d="M10 8l16-4 4 14-15 5z" fill="#f7dc6d" />
        <path d="M15 23l-4-11 16-6 3 12z" fill="#fdeb98" opacity="0.6" />
      </svg>
    ),
  },
  {
    name: "Calculator",
    icon: (
      <svg width="22" height="30" viewBox="0 0 22 30">
        <path d="M0 0h22v30H0z" fill="#fff" />
        <path d="M2 2h18v5H2z" fill="#0a0606" />
        {[10, 17, 24].map((y) => [2, 9, 16].map((x) => <path key={`${x}-${y}`} d={`M${x} ${y}h4l-2 2-1 2h-1z`} fill="#0a0606" />))}
      </svg>
    ),
  },
  {
    name: "Snipping Tool",
    icon: (
      <svg width="28" height="29" viewBox="0 0 28 29" fill="none">
        <ellipse cx="12" cy="13" rx="11" ry="6.5" fill="#77797c" transform="rotate(-12 12 13)" />
        <ellipse cx="12" cy="8" rx="10.5" ry="7" fill="#f3f3f5" stroke="#d03636" strokeWidth="1.5" transform="rotate(-14 12 8)" />
        <path d="M10 3l8 17M5 7l15 11" stroke="#8b9098" strokeWidth="2" />
        <ellipse cx="17" cy="24" rx="2.5" ry="4" stroke="#2a8bd0" strokeWidth="2" transform="rotate(20 17 24)" />
        <ellipse cx="23.5" cy="19" rx="2.5" ry="4" stroke="#2a8bd0" strokeWidth="2" transform="rotate(50 23.5 19)" />
      </svg>
    ),
  },
  {
    name: "Google Chrome",
    open: true,
    icon: (
      <svg width="31" height="32" viewBox="0 0 31 32">
        <circle cx="14" cy="14" r="13.5" fill="#fbc934" />
        <path d="M2.3 7.2A13.5 13.5 0 0 1 26 7.5H14z" fill="#db4437" />
        <path d="M2.3 7.2A13.5 13.5 0 0 0 13 27.5l6-10-12 0z" fill="#0f9d58" />
        <path d="M2.3 7.2L8 17l6-9.500z" fill="#db4437" />
        <path d="M2.3 7.2L8.5 17.5l5 4-2 5.8A13.5 13.5 0 0 1 2.3 7.2z" fill="#0f9d58" />
        <circle cx="14" cy="14" r="6" fill="#fff" />
        <circle cx="14" cy="14" r="4.8" fill="#4285f4" />
        <rect x="11" y="13" width="20" height="18" fill="#e0e0e0" />
        <circle cx="21" cy="18.5" r="3" fill="#9b9b9b" />
        <rect x="16" y="24" width="10" height="4.5" rx="2.2" fill="#9b9b9b" />
      </svg>
    ),
  },
  {
    name: "Microsoft Excel",
    open: true,
    active: true,
    icon: (
      <svg width="29" height="28" viewBox="0 0 29 28">
        <path d="M3 2C8 0 18 0 25 1l2 25C20 24 8 24 1 25z" fill="#e3f3dc" stroke="#6fb955" strokeWidth="1.5" />
        <path d="M2 3h15v13L1 17z" fill="#f7fcf4" stroke="#8cc977" />
        <path d="M5 6h4l7 10h-4zM12 6h4L8 16H4z" fill="#1f6f2e" />
        <path d="M4 19h6v4H4zM12 19h6v4h-6zM20 19h5v4h-5zM20 13h5v4h-5z" fill="#6aab59" />
        <path d="M18 2l4 1-1 4zM22 7l5-1-1 5zM20 4l6 6" fill="#2f7fd6" stroke="#2f7fd6" />
      </svg>
    ),
  },
];

const Taskbar = () => (
  <div className="flex h-[50px] shrink-0 bg-linear-to-r from-black from-25% via-[#0b0706] via-60% to-black to-90% text-white">
    <button aria-label="Start" className="flex w-[60px] items-center justify-center">
      <svg width="20" height="20" viewBox="0 0 20 20" fill="#fff">
        <path d="M0 3l8-1.200v7.700H0zM9 1.6L20 0v9.5H9zM0 10.5h8v7.7L0 17zM9 10.5h11V20L9 18.4z" />
      </svg>
    </button>
    <input
      type="search"
      aria-label="Search the web and Windows"
      placeholder="Search the web and Windows"
      className="w-[430px] bg-[#333] pl-[15px] pt-[2px] text-[17px] leading-6 outline-none placeholder:text-[#9c9c9c]"
    />
    {TASKS.map((t) => (
      <button
        key={t.name}
        aria-label={t.name}
        className={clsx("flex w-[62px] flex-col items-center", t.active && "border-r-4 border-[#2a2a2a] bg-[#383838]")}
      >
        <span className="flex flex-1 items-center">{t.icon}</span>
        {t.open && <span className={clsx("h-[3px] bg-[#76b9ed]", t.active ? "w-full" : "w-[51px]")} />}
      </button>
    ))}
    <div className="ml-auto flex items-center pr-[5px]">
      <button aria-label="Show hidden icons" className="w-[38px]">
        <svg width="16" height="10" viewBox="0 0 16 10" fill="none" stroke="#fff" strokeWidth="1.3">
          <path d="M0.5 9L8 1.5 15.5 9" />
        </svg>
      </button>
      <button aria-label="Volume muted" className="w-[41px]">
        <svg width="18" height="14" viewBox="0 0 18 14" fill="none" stroke="#fff" strokeWidth="1.2">
          <path d="M0.5 4.5h2.500L6.5 1v12L3 9.5H0.5zM10.5 4l7 7M17.5 4l-7 7" />
        </svg>
      </button>
      <button aria-label="Battery" className="w-[42px]">
        <svg width="20" height="12" viewBox="0 0 20 12" fill="none" stroke="#fff">
          <path d="M0.5 0.5h16v10h-16zM17 3.5h1.500v4H17" />
          <path d="M2.5 3h3v5.5h-3z" fill="#fff" />
        </svg>
      </button>
      <button aria-label="Network" className="w-[37px]">
        <svg width="16" height="16" viewBox="0 0 16 16" fill="none" stroke="#fff">
          <path d="M0.5 15C0.5 7 7 0.8 15 0.5M4 15C4 9 9 4.3 15 4.2M7.5 15c0-4 3.500-7 7.500-7" />
          <path d="M12.5 13h2v2h-2z" fill="#fff" />
        </svg>
      </button>
      <button aria-label="Notifications" className="w-10">
        <svg width="21" height="20" viewBox="0 0 21 20" fill="none" stroke="#fff" strokeWidth="1.2">
          <path d="M9 16.5H0.6V0.6h18v9M3.5 4.5h12M3.5 8.5h9M3.5 12.5h5" />
          <circle cx="15" cy="14.5" r="4.7" />
          <path d="M12.5 14.5h5" />
        </svg>
      </button>
      <button aria-label="Touch keyboard" className="w-[49px]">
        <svg width="30" height="17" viewBox="0 0 30 17" fill="none" stroke="#fff">
          <path d="M0.5 0.5h29v16h-29z" />
          <path d="M4 4.5h23M4 8.5h23" strokeDasharray="2 2" />
          <path d="M4 12.5h3M9 12.5h12M23 12.5h3" />
        </svg>
      </button>
      <button className="w-[68px] whitespace-nowrap text-center text-[14px] leading-[21px]">
        1:31 AM
        <br />
        4/29/2016
      </button>
      <span className="ml-[10px] h-[50px] w-px bg-[#555]" />
    </div>
  </div>
);

export default function App() {
  return (
    <div className="flex h-screen flex-col overflow-hidden bg-[#bfdbff] font-['Open_Sans','Noto_Sans',sans-serif] [&_button>svg]:block">
      <TitleBar />
      <TabRow />
      <Ribbon />
      <FormulaBar />
      <main className="flex min-h-0 flex-1 flex-col">
        <div className="mt-[3px] flex min-h-0 flex-1 border-t border-[#5b87b8]">
          <Sheet />
          <VerticalScroll />
        </div>
      </main>
      <SheetBar />
      <StatusBar />
      <Taskbar />
    </div>
  );
}
